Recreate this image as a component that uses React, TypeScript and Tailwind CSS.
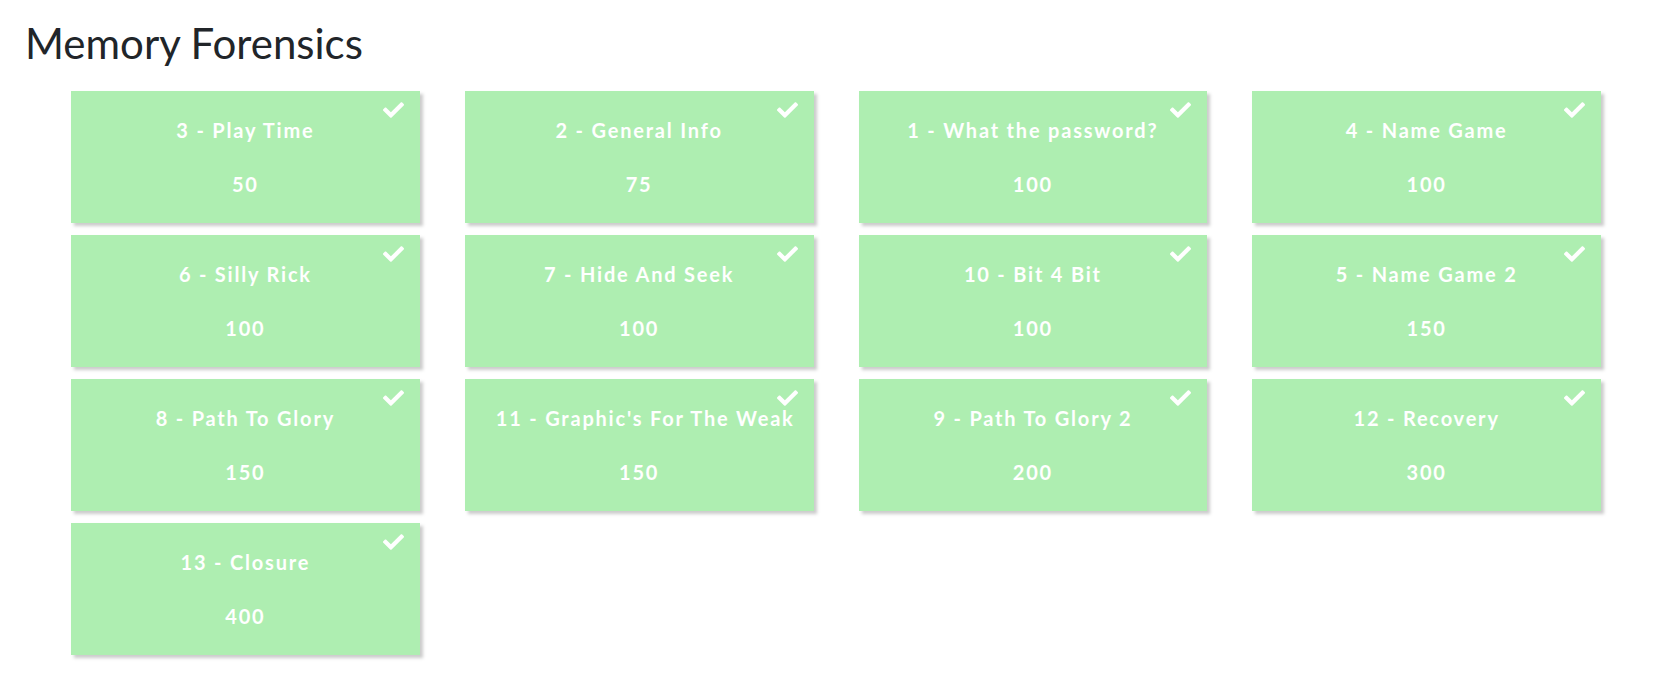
import React from "react";

interface Challenge {
  name: string;
  value: number;
}

const challenges: Challenge[] = [
  { name: "3 - Play Time", value: 50 },
  { name: "2 - General Info", value: 75 },
  { name: "1 - What the password?", value: 100 },
  { name: "4 - Name Game", value: 100 },
  { name: "6 - Silly Rick", value: 100 },
  { name: "7 - Hide And Seek", value: 100 },
  { name: "10 - Bit 4 Bit", value: 100 },
  { name: "5 - Name Game 2", value: 150 },
  { name: "8 - Path To Glory", value: 150 },
  { name: "11 - Graphic's For The Weak", value: 150 },
  { name: "9 - Path To Glory 2", value: 200 },
  { name: "12 - Recovery", value: 300 },
  { name: "13 - Closure", value: 400 },
];

function Check() {
  return (
    <svg
      viewBox="0 64 512 384"
      className="absolute right-[16px] top-[11px] h-[16px] w-[21px]"
      fill="#ffffff"
    >
      <path d="M173.898 439.404l-166.4-166.4c-9.997-9.997-9.997-26.206 0-36.204l36.203-36.204c9.997-9.998 26.207-9.998 36.204 0L192 312.69 432.095 72.596c9.997-9.997 26.207-9.997 36.204 0l36.203 36.204c9.997 9.997 9.997 26.206 0 36.204l-294.4 294.401c-9.998 9.997-26.207 9.997-36.204-.001z" />
    </svg>
  );
}

function ChallengeButton({ c }: { c: Challenge }) {
  return (
    <button className="relative block h-[132px] w-full bg-[#37d63e] px-[31px] py-6 text-center text-white opacity-40 shadow-[3px_3px_3px_#808080]">
      <Check />
      <p className="mb-6 whitespace-nowrap text-[20px] font-bold leading-[30px] tracking-[1.8px]">
        {c.name}
      </p>
      <span className="block text-[20px] font-bold leading-[30px] tracking-[1.8px]">
        {c.value}
      </span>
    </button>
  );
}

export default function App() {
  return (
    <div
      className="min-h-screen bg-white pt-[18px] text-[#212529]"
      style={{ fontFamily: "Lato, 'Open Sans', sans-serif" }}
    >
      <h3 className="pl-[25px] text-[42px] font-normal leading-[1.2]">
        Memory Forensics
      </h3>
      <div className="ml-[71px] mt-[23px] grid w-[1530px] grid-cols-4 gap-x-[45px] gap-y-[12px]">
        {challenges.map((c) => (
          <ChallengeButton key={c.name} c={c} />
        ))}
      </div>
    </div>
  );
}
